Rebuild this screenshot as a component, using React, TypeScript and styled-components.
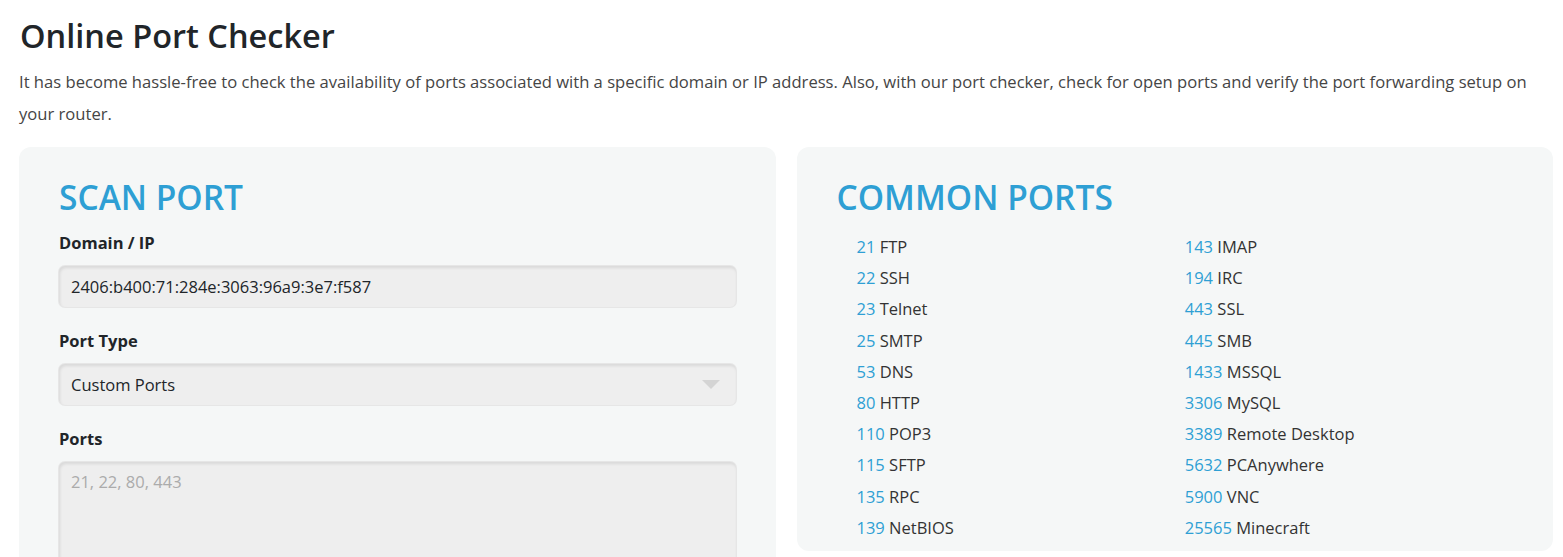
import React from "react";
import styled, { createGlobalStyle } from "styled-components";

const GlobalStyle = createGlobalStyle`
  body {
    margin: 0;
    background: #ffffff;
    font-family: "Open Sans", "Noto Sans", sans-serif;
    color: #212529;
  }
  * {
    box-sizing: border-box;
  }
`;

const leftPorts: Array<[string, string]> = [
  ["21", "FTP"],
  ["22", "SSH"],
  ["23", "Telnet"],
  ["25", "SMTP"],
  ["53", "DNS"],
  ["80", "HTTP"],
  ["110", "POP3"],
  ["115", "SFTP"],
  ["135", "RPC"],
  ["139", "NetBIOS"],
];

const rightPorts: Array<[string, string]> = [
  ["143", "IMAP"],
  ["194", "IRC"],
  ["443", "SSL"],
  ["445", "SMB"],
  ["1433", "MSSQL"],
  ["3306", "MySQL"],
  ["3389", "Remote Desktop"],
  ["5632", "PCAnywhere"],
  ["5900", "VNC"],
  ["25565", "Minecraft"],
];

function App() {
  return (
    <Page>
      <GlobalStyle />
      <Title>Online Port Checker</Title>
      <Intro>
        It has become hassle-free to check the availability of ports associated with a specific domain or IP
        address. Also, with our port checker, check for open ports and verify the port forwarding setup on your
        router.
      </Intro>
      <Panels>
        <Panel>
          <PanelTitle>SCAN PORT</PanelTitle>
          <Field>
            <Label>Domain / IP</Label>
            <TextInput defaultValue="2406:b400:71:284e:3063:96a9:3e7:f587" />
          </Field>
          <Field>
            <Label>Port Type</Label>
            <SelectWrap>
              <Select defaultValue="custom">
                <option value="custom">Custom Ports</option>
                <option value="common">Common Ports</option>
              </Select>
              <Arrow />
            </SelectWrap>
          </Field>
          <Field>
            <Label>Ports</Label>
            <TextArea placeholder="21, 22, 80, 443" />
          </Field>
        </Panel>
        <Panel $compact>
          <PanelTitle>COMMON PORTS</PanelTitle>
          <PortGrid>
            {[leftPorts, rightPorts].map((col, i) => (
              <PortList key={i}>
                {col.map(([num, name]) => (
                  <PortItem key={num}>
                    <PortNum>{num}</PortNum> {name}
                  </PortItem>
                ))}
              </PortList>
            ))}
          </PortGrid>
        </Panel>
      </Panels>
    </Page>
  );
}
export default App;

const Page = styled.div`
  width: 1534px;
  margin-left: 19px;
  padding-top: 16px;
`;

const Title = styled.h1`
  margin: 0 0 0 1px;
  font-size: 32.5px;
  font-weight: 600;
  line-height: 1.2;
  color: #212529;
`;

const Intro = styled.p`
  margin: 11px 0 17px;
  font-size: 16.6px;
  line-height: 32px;
  color: #454545;
`;

const Panels = styled.div`
  display: grid;
  grid-template-columns: 1fr 1fr;
  gap: 21px;
  align-items: start;
`;

const Panel = styled.section<{ $compact?: boolean }>`
  background: #f5f7f7;
  border-radius: 12px;
  padding: 29px 40px ${(p) => (p.$compact ? "8px" : "30px")};
`;

const PanelTitle = styled.h2`
  margin: 0 0 13px;
  font-size: 33.5px;
  font-weight: 600;
  line-height: 42px;
  color: #2e9fd4;
`;

const Field = styled.div`
  display: flex;
  flex-direction: column;
  gap: 11px;
  margin-bottom: 22px;
`;

const Label = styled.label`
  font-size: 16.5px;
  font-weight: 700;
  line-height: 24px;
  color: #212529;
`;

const controlBase = `
  width: 100%;
  height: 41px;
  border: none;
  border-radius: 6px;
  background: #eeeeee;
  box-shadow: inset 1px 2px 3px rgba(0, 0, 0, 0.09), 0 0 0 1px #e6e6e6;
  padding: 0 12px;
  font-family: "Open Sans", "Noto Sans", sans-serif;
  font-size: 16.5px;
  color: #212529;
  outline: none;
`;

const TextInput = styled.input`
  ${controlBase}
`;

const SelectWrap = styled.div`
  position: relative;
`;

const Select = styled.select`
  ${controlBase}
  appearance: none;
  -webkit-appearance: none;
  cursor: pointer;
`;

const Arrow = styled.span`
  position: absolute;
  right: 16px;
  top: 16px;
  width: 0;
  height: 0;
  border-left: 9px solid transparent;
  border-right: 9px solid transparent;
  border-top: 9px solid #d4d4d4;
  pointer-events: none;
`;

const TextArea = styled.textarea`
  ${controlBase}
  height: 160px;
  padding: 8px 12px;
  resize: none;
  &::placeholder {
    color: #ababab;
  }
`;

const PortGrid = styled.div`
  display: grid;
  grid-template-columns: 1fr 1fr;
  padding-left: 20px;
`;

const PortList = styled.ul`
  margin: 0;
  padding: 0;
  list-style: none;
`;

const PortItem = styled.li`
  font-size: 16.5px;
  line-height: 31.2px;
  color: #333333;
`;

const PortNum = styled.span`
  color: #2e9fd4;
`;
